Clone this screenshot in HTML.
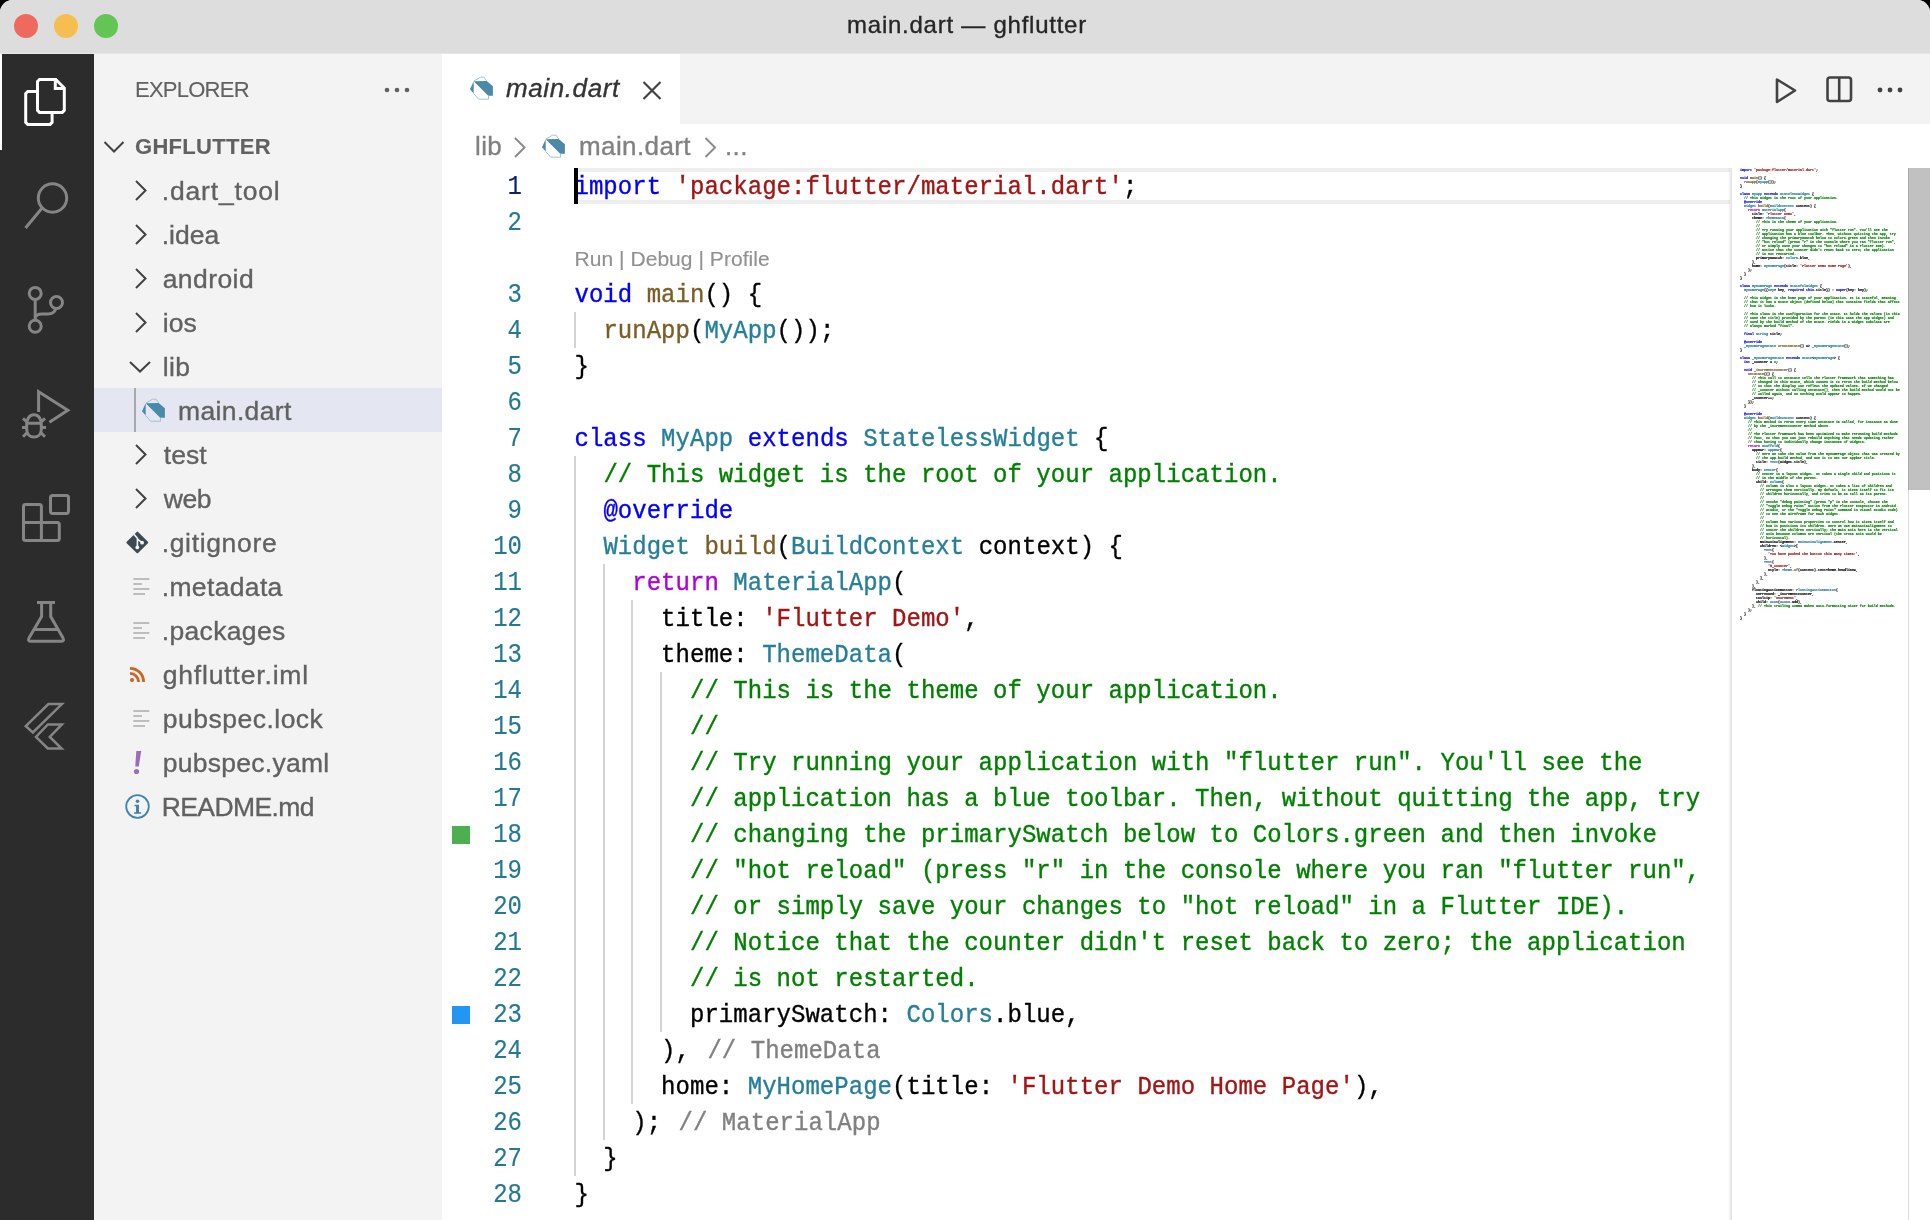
<!DOCTYPE html>
<html><head><meta charset="utf-8">
<style>
*{margin:0;padding:0;box-sizing:border-box}
html,body{width:1930px;height:1220px;overflow:hidden;background:#000}
body{position:relative;font-family:"Liberation Sans",sans-serif;-webkit-text-stroke-width:0.35px}
.mm{-webkit-text-stroke-width:0.15px}
.abs{position:absolute}
#win{position:absolute;left:0;top:0;width:1930px;height:1220px;background:#fff;border-radius:12.5px 12.5px 0 0;overflow:hidden;will-change:transform}
#title{position:absolute;left:0;top:0;width:1930px;height:54px;background:#dddddd;border-bottom:1px solid #e6e6e6}
#title .t{position:absolute;left:0;width:1934px;top:7.5px;text-align:center;font-size:24px;color:#262626;line-height:34px;letter-spacing:0.75px}
.tl{position:absolute;top:14px;width:24px;height:24px;border-radius:50%}
#act{position:absolute;left:0;top:54px;width:94px;height:1166px;background:#2c2c2c}
#actind{position:absolute;left:0;top:54px;width:2px;height:96px;background:#fff}
#side{position:absolute;left:94px;top:54px;width:348px;height:1166px;background:#f3f3f3}
.sh{position:absolute;left:135px;top:76px;font-size:22px;color:#616161;line-height:28px;letter-spacing:-0.75px;-webkit-text-stroke-width:0.1px}
.row{position:absolute;left:94px;width:348px;height:44px}
.row .nm{position:absolute;top:7.5px;font-size:26.5px;line-height:30px;color:#616161;white-space:pre}
.sel{background:#e4e6f1}
#tabs{position:absolute;left:442px;top:54px;width:1488px;height:70px;background:#f3f3f3}
#tab{position:absolute;left:442px;top:54px;width:238px;height:70px;background:#fff}
#tab .nm{position:absolute;left:64px;top:19px;font-size:26px;line-height:30px;font-style:italic;color:#333;letter-spacing:0.6px}
.bc{position:absolute;top:131px;font-size:26px;line-height:30px;color:#818181;white-space:pre;letter-spacing:0.4px}
.ln{position:absolute;left:442px;width:80px;height:36px;line-height:36px;padding-top:2px;transform:scaleY(1.16);transform-origin:0 25.9px;text-align:right;font-family:"Liberation Mono",monospace;font-size:24px;color:#237893;-webkit-text-stroke-width:0.15px}
.ln.act{color:#0b216f}
.cl{position:absolute;left:574.5px;height:36px;line-height:36px;padding-top:1.5px;transform:scaleY(1.06);transform-origin:0 25.9px;font-family:"Liberation Mono",monospace;font-size:24px;letter-spacing:0.03px;white-space:pre;color:#000}
.kw{color:#0000ff}.ctrl{color:#af00db}.str{color:#a31515}.fn{color:#795e26}.type{color:#267f99}.com{color:#008000}.label{color:#808080;margin-left:3px}.num{color:#098658}
.ig{position:absolute;width:2px;background:#d3d3d3}
#curline{position:absolute;left:574px;top:168px;width:1156px;height:36px;border-top:4px solid #eeeeee;border-bottom:4px solid #eeeeee}
#cursor{position:absolute;left:574px;top:168px;width:4px;height:36px;background:#000}
.lens{position:absolute;left:574.5px;top:240.5px;height:36px;line-height:36px;font-size:21px;color:#919191;white-space:pre;-webkit-text-stroke-width:0.15px;letter-spacing:0.05px}
.mm{position:absolute;left:1740px;top:168px;font-family:"Liberation Mono",monospace;font-size:3.334px;font-weight:bold;line-height:4px;white-space:pre;color:#000}
.mm div{height:4px}
.mm{will-change:transform}
#mmshadow{position:absolute;left:1728px;top:168px;width:4px;height:1052px;background:linear-gradient(to right,rgba(0,0,0,0),rgba(0,0,0,0.12))}
#slider{position:absolute;left:1908px;top:168px;width:22px;height:322px;background:#c1c1c1;border-left:1px solid #ababab}
#sbline{position:absolute;left:1908px;top:168px;width:1px;height:1052px;background:#dadada}
.deco{position:absolute;left:452px;width:18px;height:18px}
</style></head><body>
<div id="win">
<div id="title">
  <div class="tl" style="left:14px;background:#ee6a5f"></div>
  <div class="tl" style="left:54px;background:#f5bf4f"></div>
  <div class="tl" style="left:94px;background:#62c554"></div>
  <div class="t">main.dart — ghflutter</div>
</div>
<div id="act"></div>
<div id="actind"></div>
<svg class="abs" style="left:0;top:0" width="94" height="1220" viewBox="0 0 94 1220">
 <g fill="none" stroke="#ffffff" stroke-width="3" stroke-linejoin="round">
  <path stroke-linejoin="miter" d="M39.5 79.5 H55.8 L64.3 88 V110.4 L62.3 112.4 H39.5 L37.5 110.4 V81.5 Z"/>
  <path stroke-linejoin="miter" d="M37.5 91.5 H27.7 L25.7 93.5 V122.4 L27.7 124.4 H50.1 L52.1 122.4 V112.4"/>
  <path stroke-linejoin="miter" d="M55.3 79.5 V88.4 H64.3" />
 </g>
 <g fill="none" stroke="#858585" stroke-width="3">
  <circle cx="52.5" cy="198" r="14.2"/>
  <path d="M42.5 207.5 L25.5 228"/>
  <circle cx="35.2" cy="293.4" r="6"/>
  <circle cx="56.5" cy="302.5" r="6"/>
  <circle cx="35.2" cy="326.2" r="6"/>
  <path d="M35.2 299.4 V320.2"/>
  <path d="M56 308.5 Q54 314 48 314 H42 Q36 314 35.2 318"/>
  <path d="M38.6 412 V391.8 L67.8 410.3 L49.4 422.3"/>
  <path d="M34 414.8 C38.5 414.8 41.3 419 41.3 424 V429.5 C41.3 434 38.3 437 34 437 C29.7 437 26.7 434 26.7 429.5 V424 C26.7 419 29.5 414.8 34 414.8 Z"/>
  <path d="M22 427.5 H26 M42 427.5 H46 M23 418.3 L27 422 M45 418.3 L41 422 M23 436.7 L27 432.7 M45 436.7 L41 432.7 M27 423.3 H41"/>
  <path d="M23.5 506.5 Q23.5 504.6 25.5 504.6 H39.4 Q41.4 504.6 41.4 506.6 V522.5 H57.3 Q59.3 522.5 59.3 524.5 V538.5 Q59.3 540.5 57.3 540.5 H25.5 Q23.5 540.5 23.5 538.5 Z M23.5 522.5 H41.4 V540.5"/>
  <rect x="50.5" y="495.5" width="18" height="18" rx="2.2"/>
  <path d="M37 602.5 H55 M41.6 604 V616.6 L29 638 Q27.5 641.3 31 641.3 H61 Q64.5 641.3 63 638 L50.7 616.6 V604 M34.7 629.5 H57.3"/>
  <path stroke-width="2.5" d="M25.8 726.1 L48.4 704.1 H61.9 L32.9 732.5 Z M61.9 724.4 H47.8 L36 737 L47.8 748.5 H61.6 L49.8 737 Z"/>
 </g>
</svg>
<div id="side">
</div>
<div class="sh">EXPLORER</div>
<svg class="abs" style="left:0;top:0" width="442" height="1220" viewBox="0 0 442 1220">
 <g fill="#616161"><circle cx="387" cy="90" r="2.3"/><circle cx="397" cy="90" r="2.3"/><circle cx="407" cy="90" r="2.3"/></g>
</svg>
<div class="row" style="top:124px"><div class="nm" style="left:41px;font-size:22px;font-weight:bold;top:7.5px;letter-spacing:0.3px;-webkit-text-stroke-width:0.1px">GHFLUTTER</div></div>
<div class="row" style="top:168px"><div class="nm" style="left:67.7px;letter-spacing:0.84px">.dart_tool</div></div>
<div class="row" style="top:212px"><div class="nm" style="left:67.7px;letter-spacing:0.00px">.idea</div></div>
<div class="row" style="top:256px"><div class="nm" style="left:68.7px;letter-spacing:0.43px">android</div></div>
<div class="row" style="top:300px"><div class="nm" style="left:68.7px;letter-spacing:0.15px">ios</div></div>
<div class="row" style="top:344px"><div class="nm" style="left:68.7px;letter-spacing:0.35px">lib</div></div>
<div class="row sel" style="top:388px"><div class="nm" style="left:84.0px;letter-spacing:0.36px">main.dart</div></div>
<div class="row" style="top:432px"><div class="nm" style="left:69.7px;letter-spacing:0.10px">test</div></div>
<div class="row" style="top:476px"><div class="nm" style="left:69.7px;letter-spacing:-0.35px">web</div></div>
<div class="row" style="top:520px"><div class="nm" style="left:67.7px;letter-spacing:0.66px">.gitignore</div></div>
<div class="row" style="top:564px"><div class="nm" style="left:67.7px;letter-spacing:0.35px">.metadata</div></div>
<div class="row" style="top:608px"><div class="nm" style="left:67.7px;letter-spacing:0.35px">.packages</div></div>
<div class="row" style="top:652px"><div class="nm" style="left:68.7px;letter-spacing:0.83px">ghflutter.iml</div></div>
<div class="row" style="top:696px"><div class="nm" style="left:68.7px;letter-spacing:0.50px">pubspec.lock</div></div>
<div class="row" style="top:740px"><div class="nm" style="left:68.7px;letter-spacing:0.27px">pubspec.yaml</div></div>
<div class="row" style="top:784px"><div class="nm" style="left:67.7px;letter-spacing:-0.59px">README.md</div></div>
<svg class="abs" style="left:0;top:0" width="442" height="1220" viewBox="0 0 442 1220">
 <defs>
  <g id="dart">
   <path fill="#4a8aa8" d="M9.7 11.2 L22.7 10.9 L28.9 16.2 V25.8 H24.2 Z M9.7 11.2 L6 19.2 L9.7 23.6 Z"/>
   <path fill="none" stroke="#a3c3d3" stroke-width="1" d="M9.7 23.6 L14.7 29.2 H24.5 V25.8 M9.7 11.2 L16.5 7.2 H20 L22.7 10.9"/>
  </g>
 </defs>
 <g fill="none" stroke="#424242" stroke-width="2">
  <path d="M104.5 142 L114 151.5 L123.5 142"/>
  <path d="M136 181 L145.5 190.5 L136 200"/>
  <path d="M136 225 L145.5 234.5 L136 244"/>
  <path d="M136 269 L145.5 278.5 L136 288"/>
  <path d="M136 313 L145.5 322.5 L136 332"/>
  <path d="M130 362 L140 371.5 L150 362"/>
  <path d="M136 445 L145.5 454.5 L136 464"/>
  <path d="M136 489 L145.5 498.5 L136 508"/>
 </g>
 <rect x="134" y="388" width="2" height="44" fill="#a9a9a9"/>
 <use href="#dart" x="136" y="392"/>
 <path fill="#3b4b54" stroke="#3b4b54" stroke-width="2" stroke-linejoin="round" d="M137.4 532.6 L147.2 542.5 L137.4 552.3 L127.4 542.5 Z"/>
 <path fill="none" stroke="#f3f3f3" stroke-width="1.6" d="M134 534.4 L137.4 538.3 V547 M137.8 539.3 L142 542.7"/><circle cx="137.3" cy="547.4" r="1.9" fill="#f3f3f3"/><circle cx="142.1" cy="542.7" r="1.9" fill="#f3f3f3"/>
 <g stroke="#bcbdbc" stroke-width="1.8">
  <path d="M133.3 579 H149.3 M133.3 584 H142 M133.3 589 H149.3 M133.3 594 H145"/>
  <path d="M133.3 623 H149.3 M133.3 628 H142 M133.3 633 H149.3 M133.3 638 H145"/>
  <path d="M133.3 711 H149.3 M133.3 716 H142 M133.3 721 H149.3 M133.3 726 H145"/>
 </g>
 <g fill="none" stroke="#cc6524" stroke-width="2.8">
  <path d="M130 668.3 A 13.6 13.6 0 0 1 143.6 682"/>
  <path d="M130 673.4 A 8.6 8.6 0 0 1 138.6 682"/>
 </g>
 <circle cx="132" cy="680" r="2.1" fill="#cc6524"/>
 <path fill="#9b6cbc" d="M136.3 751 H141.2 L138.8 766.5 H135.3 Z"/>
 <circle cx="136.5" cy="771.5" r="2.6" fill="#9b6cbc"/>
 <circle cx="137.5" cy="806.5" r="11.3" fill="none" stroke="#3d86a8" stroke-width="1.8"/>
 <g fill="#3d86a8"><circle cx="137.5" cy="801.2" r="1.8"/><path d="M134.5 804.7 H139 V812.2 H141.2 V813.8 H134 V812.2 H136 V806.2 H134.5 Z"/></g>
</svg>
<div id="tabs"></div>
<div id="tab"><div class="nm">main.dart</div></div>
<svg class="abs" style="left:442px;top:54px" width="1488" height="120" viewBox="442 54 1488 120">
 <use href="#dart" x="464" y="70"/>
 <path fill="none" stroke="#424242" stroke-width="2.2" d="M643.5 82 L660.5 99 M660.5 82 L643.5 99"/>
 <path fill="none" stroke="#8a8a8a" stroke-width="2" d="M515 138 L524.5 147.5 L515 157 M705.5 138 L715 147.5 L705.5 157"/>
 <use href="#dart" x="536" y="128"/>
 <g fill="none" stroke="#424242" stroke-width="2.6" stroke-linejoin="round">
  <path d="M1777 79.5 V102 L1795 90.5 Z"/>
  <rect x="1827.5" y="77.5" width="23.5" height="23.5" rx="2.5"/>
  <path d="M1839.2 77.5 V101"/>
 </g>
 <g fill="#424242"><circle cx="1880" cy="90" r="2.4"/><circle cx="1890" cy="90" r="2.4"/><circle cx="1900" cy="90" r="2.4"/></g>
</svg>
<div class="bc" style="left:475px">lib</div>
<div class="bc" style="left:579px">main.dart</div>
<div class="bc" style="left:725px">...</div>
<div id="curline"></div>
<div class="ig" style="left:573.7px;top:312px;height:36px"></div><div class="ig" style="left:573.7px;top:456px;height:36px"></div><div class="ig" style="left:573.7px;top:492px;height:36px"></div><div class="ig" style="left:573.7px;top:528px;height:36px"></div><div class="ig" style="left:573.7px;top:564px;height:36px"></div><div class="ig" style="left:602.6px;top:564px;height:36px"></div><div class="ig" style="left:573.7px;top:600px;height:36px"></div><div class="ig" style="left:602.6px;top:600px;height:36px"></div><div class="ig" style="left:631.4px;top:600px;height:36px"></div><div class="ig" style="left:573.7px;top:636px;height:36px"></div><div class="ig" style="left:602.6px;top:636px;height:36px"></div><div class="ig" style="left:631.4px;top:636px;height:36px"></div><div class="ig" style="left:573.7px;top:672px;height:36px"></div><div class="ig" style="left:602.6px;top:672px;height:36px"></div><div class="ig" style="left:631.4px;top:672px;height:36px"></div><div class="ig" style="left:660.3px;top:672px;height:36px"></div><div class="ig" style="left:573.7px;top:708px;height:36px"></div><div class="ig" style="left:602.6px;top:708px;height:36px"></div><div class="ig" style="left:631.4px;top:708px;height:36px"></div><div class="ig" style="left:660.3px;top:708px;height:36px"></div><div class="ig" style="left:573.7px;top:744px;height:36px"></div><div class="ig" style="left:602.6px;top:744px;height:36px"></div><div class="ig" style="left:631.4px;top:744px;height:36px"></div><div class="ig" style="left:660.3px;top:744px;height:36px"></div><div class="ig" style="left:573.7px;top:780px;height:36px"></div><div class="ig" style="left:602.6px;top:780px;height:36px"></div><div class="ig" style="left:631.4px;top:780px;height:36px"></div><div class="ig" style="left:660.3px;top:780px;height:36px"></div><div class="ig" style="left:573.7px;top:816px;height:36px"></div><div class="ig" style="left:602.6px;top:816px;height:36px"></div><div class="ig" style="left:631.4px;top:816px;height:36px"></div><div class="ig" style="left:660.3px;top:816px;height:36px"></div><div class="ig" style="left:573.7px;top:852px;height:36px"></div><div class="ig" style="left:602.6px;top:852px;height:36px"></div><div class="ig" style="left:631.4px;top:852px;height:36px"></div><div class="ig" style="left:660.3px;top:852px;height:36px"></div><div class="ig" style="left:573.7px;top:888px;height:36px"></div><div class="ig" style="left:602.6px;top:888px;height:36px"></div><div class="ig" style="left:631.4px;top:888px;height:36px"></div><div class="ig" style="left:660.3px;top:888px;height:36px"></div><div class="ig" style="left:573.7px;top:924px;height:36px"></div><div class="ig" style="left:602.6px;top:924px;height:36px"></div><div class="ig" style="left:631.4px;top:924px;height:36px"></div><div class="ig" style="left:660.3px;top:924px;height:36px"></div><div class="ig" style="left:573.7px;top:960px;height:36px"></div><div class="ig" style="left:602.6px;top:960px;height:36px"></div><div class="ig" style="left:631.4px;top:960px;height:36px"></div><div class="ig" style="left:660.3px;top:960px;height:36px"></div><div class="ig" style="left:573.7px;top:996px;height:36px"></div><div class="ig" style="left:602.6px;top:996px;height:36px"></div><div class="ig" style="left:631.4px;top:996px;height:36px"></div><div class="ig" style="left:660.3px;top:996px;height:36px"></div><div class="ig" style="left:573.7px;top:1032px;height:36px"></div><div class="ig" style="left:602.6px;top:1032px;height:36px"></div><div class="ig" style="left:631.4px;top:1032px;height:36px"></div><div class="ig" style="left:573.7px;top:1068px;height:36px"></div><div class="ig" style="left:602.6px;top:1068px;height:36px"></div><div class="ig" style="left:631.4px;top:1068px;height:36px"></div><div class="ig" style="left:573.7px;top:1104px;height:36px"></div><div class="ig" style="left:602.6px;top:1104px;height:36px"></div><div class="ig" style="left:573.7px;top:1140px;height:36px"></div>
<div class="lens">Run | Debug | Profile</div>
<div class="ln act" style="top:168px">1</div><div class="cl" style="top:168px"><span class="kw">import</span> <span class="str">&#x27;package:flutter/material.dart&#x27;</span>;</div><div class="ln" style="top:204px">2</div><div class="cl" style="top:204px"></div><div class="ln" style="top:276px">3</div><div class="cl" style="top:276px"><span class="kw">void</span> <span class="fn">main</span>() {</div><div class="ln" style="top:312px">4</div><div class="cl" style="top:312px">  <span class="fn">runApp</span>(<span class="type">MyApp</span>());</div><div class="ln" style="top:348px">5</div><div class="cl" style="top:348px">}</div><div class="ln" style="top:384px">6</div><div class="cl" style="top:384px"></div><div class="ln" style="top:420px">7</div><div class="cl" style="top:420px"><span class="kw">class</span> <span class="type">MyApp</span> <span class="kw">extends</span> <span class="type">StatelessWidget</span> {</div><div class="ln" style="top:456px">8</div><div class="cl" style="top:456px">  <span class="com">// This widget is the root of your application.</span></div><div class="ln" style="top:492px">9</div><div class="cl" style="top:492px">  <span class="kw">@override</span></div><div class="ln" style="top:528px">10</div><div class="cl" style="top:528px">  <span class="type">Widget</span> <span class="fn">build</span>(<span class="type">BuildContext</span> context) {</div><div class="ln" style="top:564px">11</div><div class="cl" style="top:564px">    <span class="ctrl">return</span> <span class="type">MaterialApp</span>(</div><div class="ln" style="top:600px">12</div><div class="cl" style="top:600px">      title: <span class="str">&#x27;Flutter Demo&#x27;</span>,</div><div class="ln" style="top:636px">13</div><div class="cl" style="top:636px">      theme: <span class="type">ThemeData</span>(</div><div class="ln" style="top:672px">14</div><div class="cl" style="top:672px">        <span class="com">// This is the theme of your application.</span></div><div class="ln" style="top:708px">15</div><div class="cl" style="top:708px">        <span class="com">//</span></div><div class="ln" style="top:744px">16</div><div class="cl" style="top:744px">        <span class="com">// Try running your application with &quot;flutter run&quot;. You&#x27;ll see the</span></div><div class="ln" style="top:780px">17</div><div class="cl" style="top:780px">        <span class="com">// application has a blue toolbar. Then, without quitting the app, try</span></div><div class="ln" style="top:816px">18</div><div class="cl" style="top:816px">        <span class="com">// changing the primarySwatch below to Colors.green and then invoke</span></div><div class="ln" style="top:852px">19</div><div class="cl" style="top:852px">        <span class="com">// &quot;hot reload&quot; (press &quot;r&quot; in the console where you ran &quot;flutter run&quot;,</span></div><div class="ln" style="top:888px">20</div><div class="cl" style="top:888px">        <span class="com">// or simply save your changes to &quot;hot reload&quot; in a Flutter IDE).</span></div><div class="ln" style="top:924px">21</div><div class="cl" style="top:924px">        <span class="com">// Notice that the counter didn&#x27;t reset back to zero; the application</span></div><div class="ln" style="top:960px">22</div><div class="cl" style="top:960px">        <span class="com">// is not restarted.</span></div><div class="ln" style="top:996px">23</div><div class="cl" style="top:996px">        primarySwatch: <span class="type">Colors</span>.blue,</div><div class="ln" style="top:1032px">24</div><div class="cl" style="top:1032px">      ),<span class="label"> // ThemeData</span></div><div class="ln" style="top:1068px">25</div><div class="cl" style="top:1068px">      home: <span class="type">MyHomePage</span>(title: <span class="str">&#x27;Flutter Demo Home Page&#x27;</span>),</div><div class="ln" style="top:1104px">26</div><div class="cl" style="top:1104px">    );<span class="label"> // MaterialApp</span></div><div class="ln" style="top:1140px">27</div><div class="cl" style="top:1140px">  }</div><div class="ln" style="top:1176px">28</div><div class="cl" style="top:1176px">}</div><div class="ln" style="top:1212px">29</div><div class="cl" style="top:1212px"></div>
<div id="cursor"></div>
<div class="deco" style="top:826px;background:#4caf50"></div>
<div class="deco" style="top:1006px;background:#2196f3"></div>
<div id="mmshadow"></div>
<div class="mm"><div><span class="kw">import</span> <span class="str">&#x27;package:flutter/material.dart&#x27;</span>;</div><div>&nbsp;</div><div><span class="kw">void</span> <span class="fn">main</span>() {</div><div>  <span class="fn">runApp</span>(<span class="type">MyApp</span>());</div><div>}</div><div>&nbsp;</div><div><span class="kw">class</span> <span class="type">MyApp</span> <span class="kw">extends</span> <span class="type">StatelessWidget</span> {</div><div>  <span class="com">// This widget is the root of your application.</span></div><div>  <span class="kw">@override</span></div><div>  <span class="type">Widget</span> <span class="fn">build</span>(<span class="type">BuildContext</span> context) {</div><div>    <span class="ctrl">return</span> <span class="type">MaterialApp</span>(</div><div>      title: <span class="str">&#x27;Flutter Demo&#x27;</span>,</div><div>      theme: <span class="type">ThemeData</span>(</div><div>        <span class="com">// This is the theme of your application.</span></div><div>        <span class="com">//</span></div><div>        <span class="com">// Try running your application with &quot;flutter run&quot;. You&#x27;ll see the</span></div><div>        <span class="com">// application has a blue toolbar. Then, without quitting the app, try</span></div><div>        <span class="com">// changing the primarySwatch below to Colors.green and then invoke</span></div><div>        <span class="com">// &quot;hot reload&quot; (press &quot;r&quot; in the console where you ran &quot;flutter run&quot;,</span></div><div>        <span class="com">// or simply save your changes to &quot;hot reload&quot; in a Flutter IDE).</span></div><div>        <span class="com">// Notice that the counter didn&#x27;t reset back to zero; the application</span></div><div>        <span class="com">// is not restarted.</span></div><div>        primarySwatch: <span class="type">Colors</span>.blue,</div><div>      ),</div><div>      home: <span class="type">MyHomePage</span>(title: <span class="str">&#x27;Flutter Demo Home Page&#x27;</span>),</div><div>    );</div><div>  }</div><div>}</div><div>&nbsp;</div><div><span class="kw">class</span> <span class="type">MyHomePage</span> <span class="kw">extends</span> <span class="type">StatefulWidget</span> {</div><div>  <span class="type">MyHomePage</span>({<span class="type">Key</span>? key, <span class="kw">required</span> <span class="kw">this</span>.title}) : <span class="kw">super</span>(key: key);</div><div>&nbsp;</div><div>  <span class="com">// This widget is the home page of your application. It is stateful, meaning</span></div><div>  <span class="com">// that it has a State object (defined below) that contains fields that affect</span></div><div>  <span class="com">// how it looks.</span></div><div>&nbsp;</div><div>  <span class="com">// This class is the configuration for the state. It holds the values (in this</span></div><div>  <span class="com">// case the title) provided by the parent (in this case the App widget) and</span></div><div>  <span class="com">// used by the build method of the State. Fields in a Widget subclass are</span></div><div>  <span class="com">// always marked &quot;final&quot;.</span></div><div>&nbsp;</div><div>  <span class="kw">final</span> <span class="type">String</span> title;</div><div>&nbsp;</div><div>  <span class="kw">@override</span></div><div>  <span class="type">_MyHomePageState</span> <span class="fn">createState</span>() =&gt; <span class="type">_MyHomePageState</span>();</div><div>}</div><div>&nbsp;</div><div><span class="kw">class</span> <span class="type">_MyHomePageState</span> <span class="kw">extends</span> <span class="type">State</span>&lt;<span class="type">MyHomePage</span>&gt; {</div><div>  <span class="kw">int</span> _counter = <span class="num">0</span>;</div><div>&nbsp;</div><div>  <span class="kw">void</span> <span class="fn">_incrementCounter</span>() {</div><div>    <span class="fn">setState</span>(() {</div><div>      <span class="com">// This call to setState tells the Flutter framework that something has</span></div><div>      <span class="com">// changed in this State, which causes it to rerun the build method below</span></div><div>      <span class="com">// so that the display can reflect the updated values. If we changed</span></div><div>      <span class="com">// _counter without calling setState(), then the build method would not be</span></div><div>      <span class="com">// called again, and so nothing would appear to happen.</span></div><div>      _counter++;</div><div>    });</div><div>  }</div><div>&nbsp;</div><div>  <span class="kw">@override</span></div><div>  <span class="type">Widget</span> <span class="fn">build</span>(<span class="type">BuildContext</span> context) {</div><div>    <span class="com">// This method is rerun every time setState is called, for instance as done</span></div><div>    <span class="com">// by the _incrementCounter method above.</span></div><div>    <span class="com">//</span></div><div>    <span class="com">// The Flutter framework has been optimized to make rerunning build methods</span></div><div>    <span class="com">// fast, so that you can just rebuild anything that needs updating rather</span></div><div>    <span class="com">// than having to individually change instances of widgets.</span></div><div>    <span class="ctrl">return</span> <span class="type">Scaffold</span>(</div><div>      appBar: <span class="type">AppBar</span>(</div><div>        <span class="com">// Here we take the value from the MyHomePage object that was created by</span></div><div>        <span class="com">// the App.build method, and use it to set our appbar title.</span></div><div>        title: <span class="type">Text</span>(widget.title),</div><div>      ),</div><div>      body: <span class="type">Center</span>(</div><div>        <span class="com">// Center is a layout widget. It takes a single child and positions it</span></div><div>        <span class="com">// in the middle of the parent.</span></div><div>        child: <span class="type">Column</span>(</div><div>          <span class="com">// Column is also a layout widget. It takes a list of children and</span></div><div>          <span class="com">// arranges them vertically. By default, it sizes itself to fit its</span></div><div>          <span class="com">// children horizontally, and tries to be as tall as its parent.</span></div><div>          <span class="com">//</span></div><div>          <span class="com">// Invoke &quot;debug painting&quot; (press &quot;p&quot; in the console, choose the</span></div><div>          <span class="com">// &quot;Toggle Debug Paint&quot; action from the Flutter Inspector in Android</span></div><div>          <span class="com">// Studio, or the &quot;Toggle Debug Paint&quot; command in Visual Studio Code)</span></div><div>          <span class="com">// to see the wireframe for each widget.</span></div><div>          <span class="com">//</span></div><div>          <span class="com">// Column has various properties to control how it sizes itself and</span></div><div>          <span class="com">// how it positions its children. Here we use mainAxisAlignment to</span></div><div>          <span class="com">// center the children vertically; the main axis here is the vertical</span></div><div>          <span class="com">// axis because Columns are vertical (the cross axis would be</span></div><div>          <span class="com">// horizontal).</span></div><div>          mainAxisAlignment: <span class="type">MainAxisAlignment</span>.center,</div><div>          children: &lt;<span class="type">Widget</span>&gt;[</div><div>            <span class="type">Text</span>(</div><div>              <span class="str">&#x27;You have pushed the button this many times:&#x27;</span>,</div><div>            ),</div><div>            <span class="type">Text</span>(</div><div>              <span class="str">&#x27;$_counter&#x27;</span>,</div><div>              style: <span class="type">Theme</span>.<span class="fn">of</span>(context).textTheme.headline4,</div><div>            ),</div><div>          ],</div><div>        ),</div><div>      ),</div><div>      floatingActionButton: <span class="type">FloatingActionButton</span>(</div><div>        onPressed: _incrementCounter,</div><div>        tooltip: <span class="str">&#x27;Increment&#x27;</span>,</div><div>        child: <span class="type">Icon</span>(<span class="type">Icons</span>.add),</div><div>      ), <span class="com">// This trailing comma makes auto-formatting nicer for build methods.</span></div><div>    );</div><div>  }</div><div>}</div></div>
<div id="sbline"></div>
<div id="slider"></div>
</div>
</body></html>
